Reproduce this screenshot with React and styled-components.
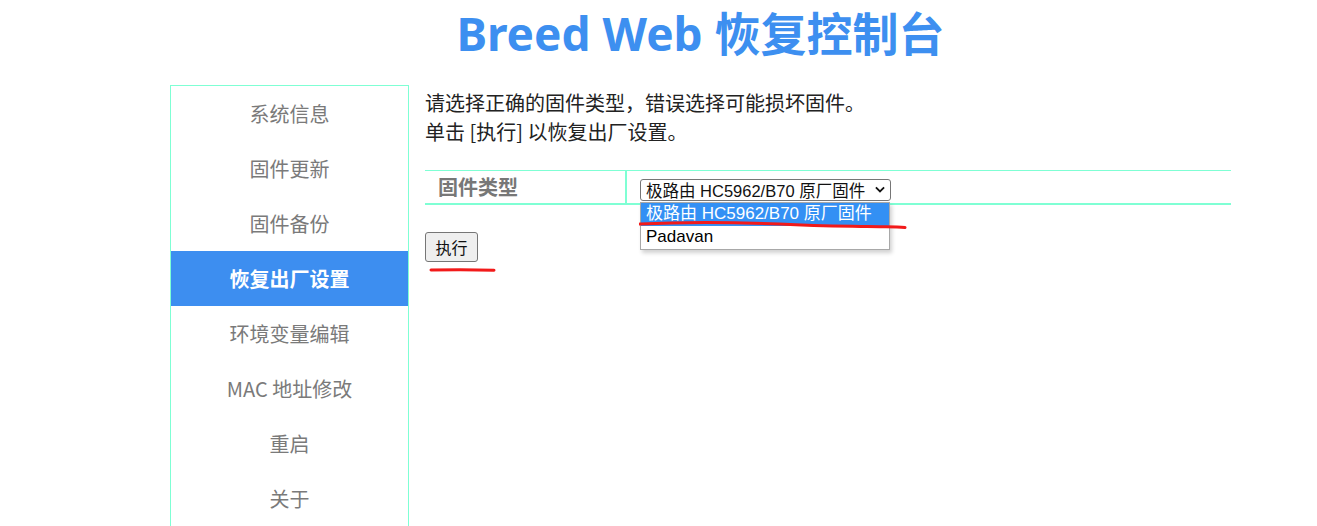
import styled, { createGlobalStyle } from 'styled-components';

const menuItems = [
  '系统信息',
  '固件更新',
  '固件备份',
  '恢复出厂设置',
  '环境变量编辑',
  'MAC 地址修改',
  '重启',
  '关于',
];

const activeItem = '恢复出厂设置';

const firmwareOptions = ['极路由 HC5962/B70 原厂固件', 'Padavan'];

const GlobalStyle = createGlobalStyle`
  html, body {
    margin: 0;
    padding: 0;
    background: #fff;
    overflow: hidden;
  }

  body {
    font-family: "Noto Sans CJK SC", "Noto Sans", sans-serif;
  }
`;

const App = () => {
  return (
    <>
      <GlobalStyle />
      <Page>
        <Header>Breed Web 恢复控制台</Header>
        <Main>
          <Sidebar>
            {menuItems.map((item) => (
              <MenuItem key={item} $active={item === activeItem}>
                {item}
              </MenuItem>
            ))}
          </Sidebar>
          <Content>
            <Notice>
              <p>请选择正确的固件类型，错误选择可能损坏固件。</p>
              <p>单击 [执行] 以恢复出厂设置。</p>
            </Notice>
            <Table>
              <LabelCell>固件类型</LabelCell>
              <FieldCell>
                <SelectWrap>
                  <SelectBox>
                    <span>{firmwareOptions[0]}</span>
                    <svg width="10" height="7" viewBox="0 0 11 7">
                      <path
                        d="M1 1.2 L5.5 5.6 L10 1.2"
                        fill="none"
                        stroke="#111"
                        strokeWidth="2"
                      />
                    </svg>
                  </SelectBox>
                  <OptionList>
                    {firmwareOptions.map((opt, i) => (
                      <Option key={opt} $selected={i === 0}>
                        {opt}
                      </Option>
                    ))}
                  </OptionList>
                  <OptionMark width="270" height="14" viewBox="0 0 270 14">
                    <path
                      d="M1 5 C40 3 90 3 140 5 C180 7 200 7 228 7.5 C245 8 255 7 266 8.5"
                      fill="none"
                      stroke="#f21a1a"
                      strokeWidth="3"
                      strokeLinecap="round"
                    />
                  </OptionMark>
                </SelectWrap>
              </FieldCell>
            </Table>
            <ButtonWrap>
              <Button>执行</Button>
              <ButtonMark width="70" height="8" viewBox="0 0 70 8">
                <path
                  d="M3 4 C25 3.5 45 3.5 66 4.2"
                  fill="none"
                  stroke="#f21a1a"
                  strokeWidth="3"
                  strokeLinecap="round"
                />
              </ButtonMark>
            </ButtonWrap>
          </Content>
        </Main>
      </Page>
    </>
  );
};

export default App;

const Page = styled.div`
  width: 1061px;
  margin-left: 170px;
`;

const Header = styled.h1`
  margin: 0;
  height: 85px;
  line-height: 66px;
  text-align: center;

  font-family: "Noto Sans", "Noto Sans CJK SC", sans-serif;
  font-size: 46px;
  font-weight: 700;
  color: #3d8ff0;
`;

const Main = styled.div`
  display: flex;
  gap: 16px;
  align-items: flex-start;
`;

const Sidebar = styled.div`
  width: 237px;
  flex-shrink: 0;

  border: 1px solid #7fffd4;
  border-bottom: none;
`;

const MenuItem = styled.div`
  height: 55px;
  line-height: 55px;
  text-align: center;

  font-size: 20px;
  font-weight: ${({ $active }) => ($active ? 700 : 400)};
  color: ${({ $active }) => ($active ? '#fff' : '#7a7a7a')};
  background: ${({ $active }) => ($active ? '#3d8ef0' : 'transparent')};
`;

const Content = styled.div`
  flex: 1 1 0;
  padding-top: 3px;
`;

const Notice = styled.div`
  font-size: 20px;
  color: #222;

  p {
    margin: 0;
    line-height: 29px;
  }
`;

const Table = styled.div`
  display: grid;
  grid-template-columns: 202px 1fr;
  margin-top: 24px;

  border-top: 1px solid #7fffd4;
  border-bottom: 2px solid #7fffd4;
`;

const LabelCell = styled.div`
  height: 32px;
  line-height: 32px;
  padding-left: 13px;

  border-right: 2px solid #7fffd4;

  font-size: 20px;
  font-weight: 700;
  color: #777;
`;

const FieldCell = styled.div`
  display: flex;
  align-items: center;
  padding-left: 13px;
  padding-top: 5px;
`;

const SelectWrap = styled.div`
  position: relative;
`;

const SelectBox = styled.div`
  width: 251px;
  height: 22px;
  box-sizing: border-box;
  display: flex;
  align-items: center;
  justify-content: space-between;
  padding: 0 5px 0 5px;

  border: 1px solid #767676;
  border-radius: 3px;
  background: #fff;

  font-family: "Liberation Sans", "Noto Sans CJK SC", sans-serif;
  font-size: 16.5px;
  color: #111;
  white-space: nowrap;
`;

const OptionList = styled.div`
  position: absolute;
  top: 23px;
  left: 0;
  width: 250px;
  box-sizing: border-box;

  border: 1px solid #a8a8a8;
  background: #fff;
  box-shadow: 2px 3px 4px rgba(0, 0, 0, 0.18);
  z-index: 2;
`;

const Option = styled.div`
  height: 23px;
  line-height: 22px;
  padding-left: 5px;

  font-family: "Liberation Sans", "Noto Sans CJK SC", sans-serif;
  font-size: 17px;
  color: ${({ $selected }) => ($selected ? '#fff' : '#000')};
  background: ${({ $selected }) => ($selected ? '#3390f4' : '#fff')};
  white-space: nowrap;
`;

const OptionMark = styled.svg`
  position: absolute;
  top: 40px;
  left: -1px;
  z-index: 3;
`;

const ButtonWrap = styled.div`
  position: relative;
  margin-top: 27px;
`;

const Button = styled.button`
  width: 53px;
  height: 30px;
  padding: 0;

  border: 1px solid #767676;
  border-radius: 3px;
  background: #efefef;

  font-family: "Noto Sans CJK SC", sans-serif;
  font-size: 16px;
  color: #111;
`;

const ButtonMark = styled.svg`
  position: absolute;
  top: 34px;
  left: 3px;
`;
